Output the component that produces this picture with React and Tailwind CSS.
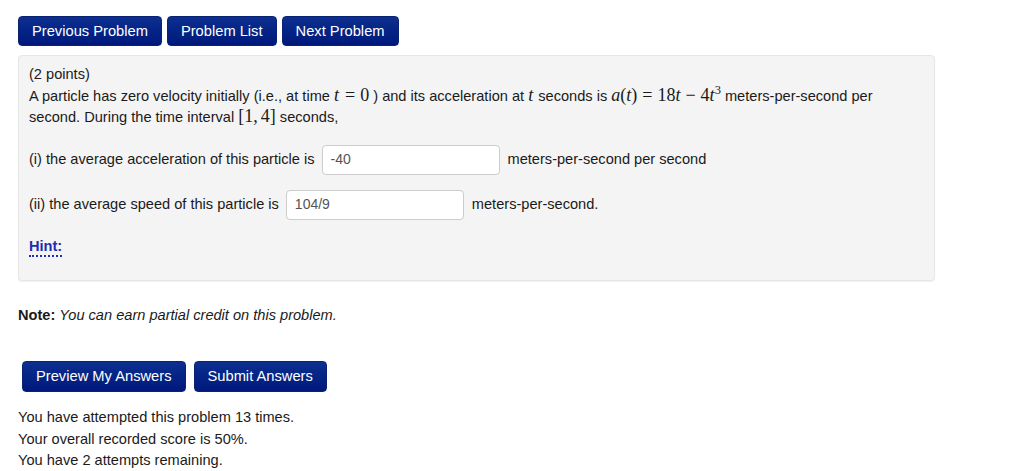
export default function App() {
  const btn =
    "h-[30px] px-[13px] rounded-[4px] border border-[#0a2272] bg-gradient-to-b from-[#0d2f8f] to-[#00187c] text-white text-[14.7px] leading-none flex items-center";
  const m = { fontFamily: '"Liberation Serif", "DejaVu Serif", serif' };
  const op = "mx-[5px]";
  return (
    <div
      className="w-[1024px] h-[471px] bg-white text-[#1a1a1a] text-[14.6px] overflow-hidden"
      style={{ fontFamily: '"Liberation Sans", Arial, sans-serif' }}
    >
      <div className="pt-[16px] pl-[18px] flex gap-[5px]">
        <button className={btn}>Previous Problem</button>
        <button className={btn}>Problem List</button>
        <button className={btn}>Next Problem</button>
      </div>

      <div className="ml-[18px] mt-[9px] w-[917px] h-[226px] bg-[#f4f4f4] border border-[#e6e6e6] rounded-[4px] shadow-[0_1px_1px_rgba(0,0,0,0.06)] pl-[10px] pr-[10px] pt-[8px]">
        <div className="leading-[21.5px]">
          <div>(2 points)</div>
          <div>
            A particle has zero velocity initially (i.e., at time{" "}
            <span style={m} className="text-[18px] leading-none">
              <i className="mr-[1px]">t</i>
              <span className={op}>=</span>0
            </span>{" "}
            ) and its acceleration at{" "}
            <span style={m} className="text-[18px] leading-none">
              <i className="mr-[1px]">t</i>
            </span>{" "}
            seconds is{" "}
            <span style={m} className="text-[18px] leading-none">
              <i>a</i>(<i>t</i>)<span className={op}>=</span>18<i>t</i>
              <span className={op}>−</span>4<i>t</i>
              <span className="text-[12.5px] leading-none relative top-[-7px]">3</span>
            </span>{" "}
            meters-per-second per
            <br />
            second. During the time interval{" "}
            <span style={m} className="text-[18px] leading-none">
              [1,<span className="ml-[3px]">4</span>]
            </span>{" "}
            seconds,
          </div>
        </div>

        <div className="mt-[16px] flex items-center h-[30px]">
          <span>(i) the average acceleration of this particle is</span>
          <div className="ml-[7px] w-[178px] h-[30px] bg-white border border-[#cccccc] rounded-[4px] flex items-center pl-[8px] text-[14px] text-[#555]">
            -40
          </div>
          <span className="ml-[8px]">meters-per-second per second</span>
        </div>

        <div className="mt-[15px] flex items-center h-[30px]">
          <span>(ii) the average speed of this particle is</span>
          <div className="ml-[7px] w-[178px] h-[30px] bg-white border border-[#cccccc] rounded-[4px] flex items-center pl-[8px] text-[14px] text-[#555]">
            104/9
          </div>
          <span className="ml-[8px]">meters-per-second.</span>
        </div>

        <div className="mt-[16px]">
          <span className="font-bold text-[#1b2fb0] border-b-[2px] border-dotted border-[#1b2fb0] leading-[17px] inline-block">
            Hint:
          </span>
        </div>
      </div>

      <div className="ml-[18px] mt-[24px] leading-[21px]">
        <b>Note:</b> <i>You can earn partial credit on this problem.</i>
      </div>

      <div className="ml-[22px] mt-[35px] flex gap-[8px]">
        <button className={btn + " h-[31px]"}>Preview My Answers</button>
        <button className={btn + " h-[31px]"}>Submit Answers</button>
      </div>

      <div className="ml-[18px] mt-[15px] leading-[21.5px]">
        <div>You have attempted this problem 13 times.</div>
        <div>Your overall recorded score is 50%.</div>
        <div>You have 2 attempts remaining.</div>
      </div>
    </div>
  );
}
